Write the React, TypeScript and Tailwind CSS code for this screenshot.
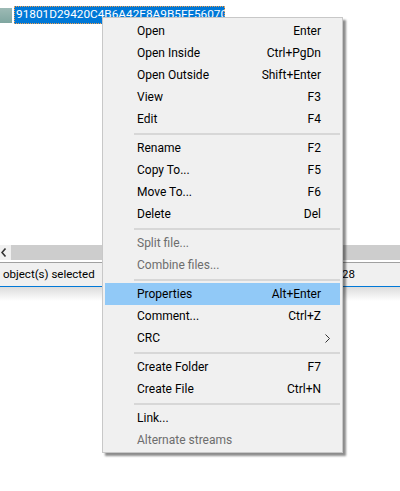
import React from 'react';

type Row = { label?: string; keys?: string; off?: boolean; active?: boolean; arrow?: boolean; sep?: boolean };

const rows: Row[] = [
  { label: 'Open', keys: 'Enter' },
  { label: 'Open Inside', keys: 'Ctrl+PgDn' },
  { label: 'Open Outside', keys: 'Shift+Enter' },
  { label: 'View', keys: 'F3' },
  { label: 'Edit', keys: 'F4' },
  { sep: true },
  { label: 'Rename', keys: 'F2' },
  { label: 'Copy To...', keys: 'F5' },
  { label: 'Move To...', keys: 'F6' },
  { label: 'Delete', keys: 'Del' },
  { sep: true },
  { label: 'Split file...', off: true },
  { label: 'Combine files...', off: true },
  { sep: true },
  { label: 'Properties', keys: 'Alt+Enter', active: true },
  { label: 'Comment...', keys: 'Ctrl+Z' },
  { label: 'CRC', arrow: true },
  { sep: true },
  { label: 'Create Folder', keys: 'F7' },
  { label: 'Create File', keys: 'Ctrl+N' },
  { sep: true },
  { label: 'Link...' },
  { label: 'Alternate streams', off: true },
];

function ContextMenu() {
  return (
    <div className="absolute left-[102px] top-[17px] w-[241px] h-[436px] bg-[#f0f0f0] border border-[#c8c8c8] p-[2px] shadow-[3px_3px_2px_rgba(0,0,0,0.45)]">
      {rows.map((row, i) =>
        row.sep ? (
          <div key={i} className="h-[7px] flex items-center pl-[29px]">
            <div className="h-[2px] w-full bg-[#d7d7d7]" />
          </div>
        ) : (
          <div
            key={i}
            className={`h-[22px] flex items-center justify-between pl-[32px] pr-[19px] ${row.active ? 'bg-[#91c9f7]' : ''} ${row.off ? 'text-[#6d6d6d]' : 'text-black'}`}
          >
            <span>{row.label}</span>
            {row.keys && <span>{row.keys}</span>}
            {row.arrow && (
              <svg width="5" height="9" viewBox="0 0 5 9" className="mr-[-9px]">
                <path d="M0.5 0.5 L4.5 4.5 L0.5 8.5" fill="none" stroke="#333" strokeWidth="1" />
              </svg>
            )}
          </div>
        )
      )}
    </div>
  );
}

export default function App() {
  return (
    <div className="relative w-[400px] h-[491px] bg-white overflow-hidden text-[12px] leading-none font-['Roboto','Open_Sans',sans-serif]">
      {/* file list */}
      <div className="h-[245px] pt-[6px] flex items-start">
        <div className="w-[12px] h-[15px] mt-[2px] bg-gradient-to-b from-[#9dbab5] to-[#7fa6a0]" />
        <div className="ml-[2px] h-[18px] flex items-center bg-[#0078d7] text-white text-[11.8px] pl-[2px] w-[211px] outline-1 outline-dotted -outline-offset-1 outline-[#f0a050] whitespace-nowrap">
          91801D29420C4B6A42E8A9B5FF56070C
        </div>
      </div>

      {/* scrollbar */}
      <div className="h-[15px] bg-[#cdcdcd] flex">
        <div className="w-[11px] bg-[#f0f0f0] flex items-center pl-[1px]">
          <svg width="6" height="9" viewBox="0 0 6 9">
            <path d="M4.5 0.5 L1 4.5 L4.5 8.5" fill="none" stroke="#333" strokeWidth="1.6" />
          </svg>
        </div>
      </div>

      {/* status bar */}
      <div className="h-[2px]" />
      <div className="h-[25px] bg-[#f0f0f0] text-[11.5px] border-t border-[#a0a0a0] border-b-[1.5px] border-b-[#0078d7] flex items-center justify-between pl-[3px] pr-[45px]">
        <span>object(s) selected</span>
        <span>28</span>
      </div>
      <div className="h-[14px] bg-gradient-to-b from-[#dcdcdc] to-white" />

      <ContextMenu />
    </div>
  );
}
